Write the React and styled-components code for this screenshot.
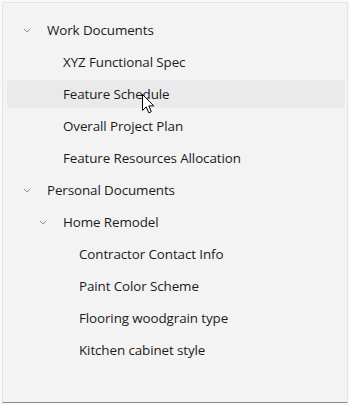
import React from 'react';
import styled, { createGlobalStyle } from 'styled-components';

const GlobalStyle = createGlobalStyle`
  html, body {
    margin: 0;
    padding: 0;
    background: #f9f9f9;
    font-family: "Segoe UI", "Open Sans", "Noto Sans", sans-serif;
  }
`;

const Panel = styled.div`
  position: relative;
  box-sizing: border-box;
  display: flex;
  flex-direction: column;
  gap: 4px;
  margin: 2px;
  width: 346px;
  height: 401px;
  background: #f3f3f3;
  border: 1px solid #e5e5e5;
  border-bottom-color: #8a8a8a;
  padding: 13px 2px 0 4px;
`;

const Row = styled.div`
  display: flex;
  align-items: center;
  flex: none;
  height: 28px;
  border-radius: 4px;
  background: ${(p) => (p.hover ? '#eaeaea' : 'transparent')};
  padding-left: ${(p) => 12 + p.level * 16}px;
  color: #1b1b1b;
  font-size: 13.4px;
  letter-spacing: -0.1px;
`;

const Glyph = styled.span`
  display: flex;
  align-items: center;
  justify-content: center;
  width: 16px;
  height: 16px;
  margin-right: 12px;
  color: #8b8b8b;
`;

const Label = styled.span`
  white-space: nowrap;
`;

const Cursor = styled.svg`
  position: absolute;
  left: 138px;
  top: 90px;
`;

const Chevron = () => (
  <svg width="8" height="5" viewBox="0 0 8 5">
    <path d="M0.8 0.8 L4 3.9 L7.2 0.8" fill="none" stroke="currentColor" strokeWidth="1" />
  </svg>
);

const items = [
  { label: 'Work Documents', level: 0, expanded: true },
  { label: 'XYZ Functional Spec', level: 1 },
  { label: 'Feature Schedule', level: 1, hover: true },
  { label: 'Overall Project Plan', level: 1 },
  { label: 'Feature Resources Allocation', level: 1 },
  { label: 'Personal Documents', level: 0, expanded: true },
  { label: 'Home Remodel', level: 1, expanded: true },
  { label: 'Contractor Contact Info', level: 2 },
  { label: 'Paint Color Scheme', level: 2 },
  { label: 'Flooring woodgrain type', level: 2 },
  { label: 'Kitchen cabinet style', level: 2 },
];

export default function App() {
  return (
    <>
      <GlobalStyle />
      <Panel>
        {items.map((item) => (
          <Row key={item.label} level={item.level} hover={item.hover}>
            <Glyph>{item.expanded ? <Chevron /> : null}</Glyph>
            <Label>{item.label}</Label>
          </Row>
        ))}
        <Cursor width="14" height="22" viewBox="0 0 14 22">
          <path
            d="M1.5 1.5 L1.5 17.5 L5.2 13.9 L7.8 19.8 L10.3 18.7 L7.8 12.9 L12.8 12.9 Z"
            fill="#fff"
            stroke="#000"
            strokeWidth="1"
            strokeLinejoin="round"
          />
        </Cursor>
      </Panel>
    </>
  );
}
